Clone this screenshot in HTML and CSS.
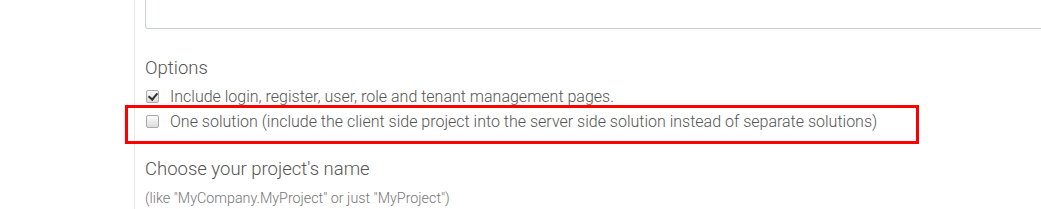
FILE: index.html
```html
<!DOCTYPE html>
<html lang="en">
<head>
<meta charset="UTF-8">
<title>Create project</title>
<link rel="stylesheet" href="styles.css">
</head>
<body>
<div class="page">
  <div class="panel">
    <div class="field"></div>

    <h3 class="section-title">Options</h3>

    <label class="check">
      <span class="box is-checked"></span>
      Include login, register, user, role and tenant management pages.
    </label>
    <label class="check">
      <span class="box"></span>
      One solution (include the client side project into the server side solution instead of separate solutions)
      <span class="mark"></span>
    </label>

    <h3 class="section-title section-title--name">Choose your project's name</h3>
    <p class="hint">(like "MyCompany.MyProject" or just "MyProject")</p>
  </div>
</div>
</body>
</html>
```

FILE: styles.css
```css
* {
	box-sizing: border-box;
}

html, body {
	height: 100%;
}

body {
	margin: 0;
	background: #fff;
	overflow: hidden;
	font-family: Roboto, "Liberation Sans", sans-serif;
	font-weight: 300;
	color: #555;
}

.page {
	height: 100%;
	padding-left: 134px;
}

.panel {
	height: 100%;
	border-left: 1px solid #e9e9e9;
	padding-left: 10px;
}

.field {
	width: calc(100% + 20px);
	height: 29px;
	border: 1px solid #c8cdd8;
	border-top: 0;
	border-radius: 0 0 3px 3px;
}

.section-title {
	margin: 27px 0 4px;
	font-size: 18.5px;
	font-weight: 300;
	line-height: 24px;
	color: #555;
}

.section-title--name {
	margin: 23px 0 0;
}

.check {
	position: relative;
	display: flex;
	align-items: center;
	gap: 11px;
	height: 25px;
	padding-left: 1px;
	font-size: 16px;
	line-height: 25px;
	color: #555;
}

.box {
	position: relative;
	flex: none;
	width: 13px;
	height: 13px;
	border: 1px solid #a9a9a9;
	border-radius: 2px;
	background: linear-gradient(#fcfcfc, #dcdcdc);
}

.box.is-checked::after {
	content: "";
	position: absolute;
	left: 3px;
	top: 0;
	width: 4px;
	height: 7px;
	border: solid #333;
	border-width: 0 2px 2px 0;
	transform: rotate(40deg);
}

.mark {
	position: absolute;
	left: -20px;
	top: -4px;
	width: 794px;
	height: 39px;
	border: 3px solid #f00;
	pointer-events: none;
}

.hint {
	margin: 8px 0 0;
	font-size: 14.3px;
	line-height: 18px;
	color: #777;
}
```
